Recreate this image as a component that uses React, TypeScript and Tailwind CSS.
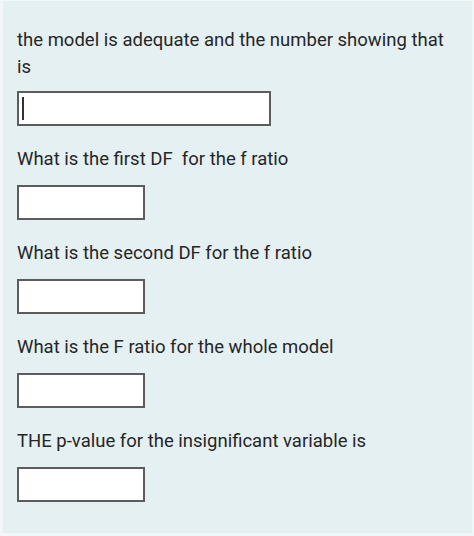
import React from "react";

function Box({ wide, cursor }: { wide?: boolean; cursor?: boolean }) {
  return (
    <div
      className={`${wide ? "w-[254px]" : "w-[128px]"} h-[35px] bg-white border-2 border-[#5c5c5c] flex items-center pl-[3px]`}
    >
      {cursor && <div className="w-[2px] h-[23px] bg-[#333]" />}
    </div>
  );
}

function Q({ text, wide, cursor }: { text: string; wide?: boolean; cursor?: boolean }) {
  return (
    <div className="flex flex-col">
      <div className="leading-[27px] whitespace-pre-wrap">{text}</div>
      <div className="mt-[12px]">
        <Box wide={wide} cursor={cursor} />
      </div>
    </div>
  );
}

export default function App() {
  return (
    <div className="w-[474px] h-[536px] bg-[#f1f7f8] pl-[3px] pb-[3px] pr-[2px] pt-[1px]">
      <div
        className="w-full h-full bg-[#e5f0f3] pl-[14px] pt-[26px] text-[18.5px] text-[#262626] flex flex-col gap-[20px]"
        style={{ fontFamily: "Roboto, 'Liberation Sans', sans-serif" }}
      >
        <div className="flex flex-col">
          <div className="leading-[27px] pr-[10px]">
            the model is adequate and the number showing that is
          </div>
          <div className="mt-[10px]">
            <Box wide cursor />
          </div>
        </div>
        <Q text={"What is the first DF  for the f ratio"} />
        <Q text="What is the second DF for the f ratio" />
        <Q text="What is the F ratio for the whole model" />
        <Q text="THE p-value for the insignificant variable is" />
      </div>
    </div>
  );
}
